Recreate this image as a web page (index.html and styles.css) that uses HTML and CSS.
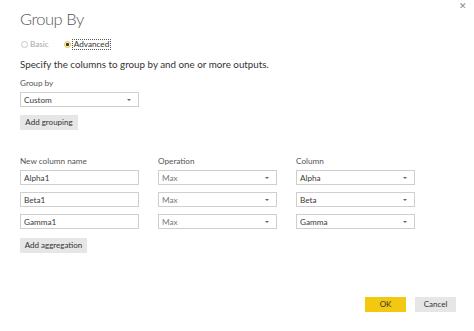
FILE: index.html
```html
<!DOCTYPE html>
<html>
<head>
<meta charset="utf-8">
<link rel="stylesheet" href="styles.css">
</head>
<body>
<div class="dialog">
  <div class="header">
    <h1 class="title">Group By</h1>
    <span class="close">&#x2715;</span>
  </div>
  <div class="radios">
    <span class="radio"><span class="circle"></span><span class="rlabel muted">Basic</span></span>
    <span class="radio"><span class="circle on"></span><span class="rlabel focus">Advanced</span></span>
  </div>
  <p class="desc">Specify the columns to group by and one or more outputs.</p>
  <div class="label">Group by</div>
  <div class="select wide"><span>Custom</span><span class="caret"></span></div>
  <button class="btn add-group">Add grouping</button>

  <div class="grid">
    <div class="label">New column name</div>
    <div class="label">Operation</div>
    <div class="label">Column</div>

    <div class="input">Alpha1</div>
    <div class="select"><span class="soft">Max</span><span class="caret"></span></div>
    <div class="select"><span>Alpha</span><span class="caret"></span></div>

    <div class="input">Beta1</div>
    <div class="select"><span class="soft">Max</span><span class="caret"></span></div>
    <div class="select"><span>Beta</span><span class="caret"></span></div>

    <div class="input">Gamma1</div>
    <div class="select"><span class="soft">Max</span><span class="caret"></span></div>
    <div class="select"><span>Gamma</span><span class="caret"></span></div>
  </div>
  <button class="btn add-agg">Add aggregation</button>

  <div class="footer">
    <button class="btn ok">OK</button>
    <button class="btn cancel">Cancel</button>
  </div>
</div>
</body>
</html>
```
FILE: styles.css
```css
html, body {
  margin: 0;
  padding: 0;
  background: #ffffff;
}
body {
  font-family: "Lato", "Noto Sans", sans-serif;
  color: #3a3a3a;
  font-size: 8.2px;
}
.dialog {
  width: 474px;
  height: 331px;
  box-sizing: border-box;
  padding: 0 18px 0 20px;
  display: flex;
  flex-direction: column;
}
.header {
  display: flex;
  justify-content: space-between;
  align-items: flex-start;
}
.title {
  margin: 9px 0 0 0;
  font-weight: 300;
  font-size: 16.5px;
  line-height: 21px;
  letter-spacing: -0.5px;
  color: #555555;
}
.close {
  margin-top: 0px;
  margin-right: -11px;
  font-size: 9px;
  line-height: 12px;
  color: #8a8a8a;
}
.radios {
  display: flex;
  gap: 14px;
  margin-top: 9px;
  height: 11px;
  align-items: center;
}
.radio {
  display: flex;
  align-items: center;
  gap: 2px;
}
.circle {
  width: 5px;
  height: 5px;
  border: 1px solid #c8c8c8;
  border-radius: 50%;
  box-sizing: content-box;
  margin-left: 1px;
}
.circle.on {
  border-color: #e0c24a;
  background: radial-gradient(circle, #333 0 1.3px, #fff4c2 1.8px);
}
.rlabel {
  font-size: 8.2px;
  line-height: 9px;
  white-space: nowrap;
}
.muted { color: #a8a8a8; }
.focus {
  outline: 1px dotted #555;
  padding: 0 1px;
  color: #333;
}
.desc {
  margin: 7px 0 0 0;
  font-size: 9.8px;
  line-height: 14px;
  color: #333;
  white-space: nowrap;
}
.label {
  font-size: 8.2px;
  line-height: 12px;
  color: #555;
  white-space: nowrap;
}
.desc + .label {
  margin-top: 6px;
}
.select, .input {
  box-sizing: border-box;
  height: 15px;
  border: 1px solid #cfcfcf;
  background: #fff;
  display: flex;
  align-items: center;
  justify-content: space-between;
  padding: 0 7px 0 3px;
  font-size: 8.2px;
  color: #3a3a3a;
  white-space: nowrap;
}
.select.wide {
  width: 119px;
  margin-top: 3px;
}
.soft { color: #777; }
.caret {
  width: 0;
  height: 0;
  border-left: 2px solid transparent;
  border-right: 2px solid transparent;
  border-top: 2.5px solid #666;
}
.btn {
  font-family: inherit;
  font-size: 8px;
  color: #333;
  border: none;
  background: #e6e6e6;
  height: 15px;
  padding: 0;
  line-height: 15px;
  text-align: center;
  white-space: nowrap;
  cursor: default;
}
.add-group {
  align-self: flex-start;
  width: 58px;
  margin-top: 8px;
}
.grid {
  display: grid;
  grid-template-columns: 119px 119px 119px;
  column-gap: 19px;
  row-gap: 7px;
  margin-top: 25px;
}
.grid .label {
  margin-bottom: -4px;
}
.add-agg {
  align-self: flex-start;
  width: 67px;
  margin-top: 9px;
}
.footer {
  display: flex;
  justify-content: flex-end;
  gap: 9px;
  margin-top: 44px;
}
.ok {
  width: 41px;
  background: #f2c811;
}
.cancel {
  width: 41px;
}
```
